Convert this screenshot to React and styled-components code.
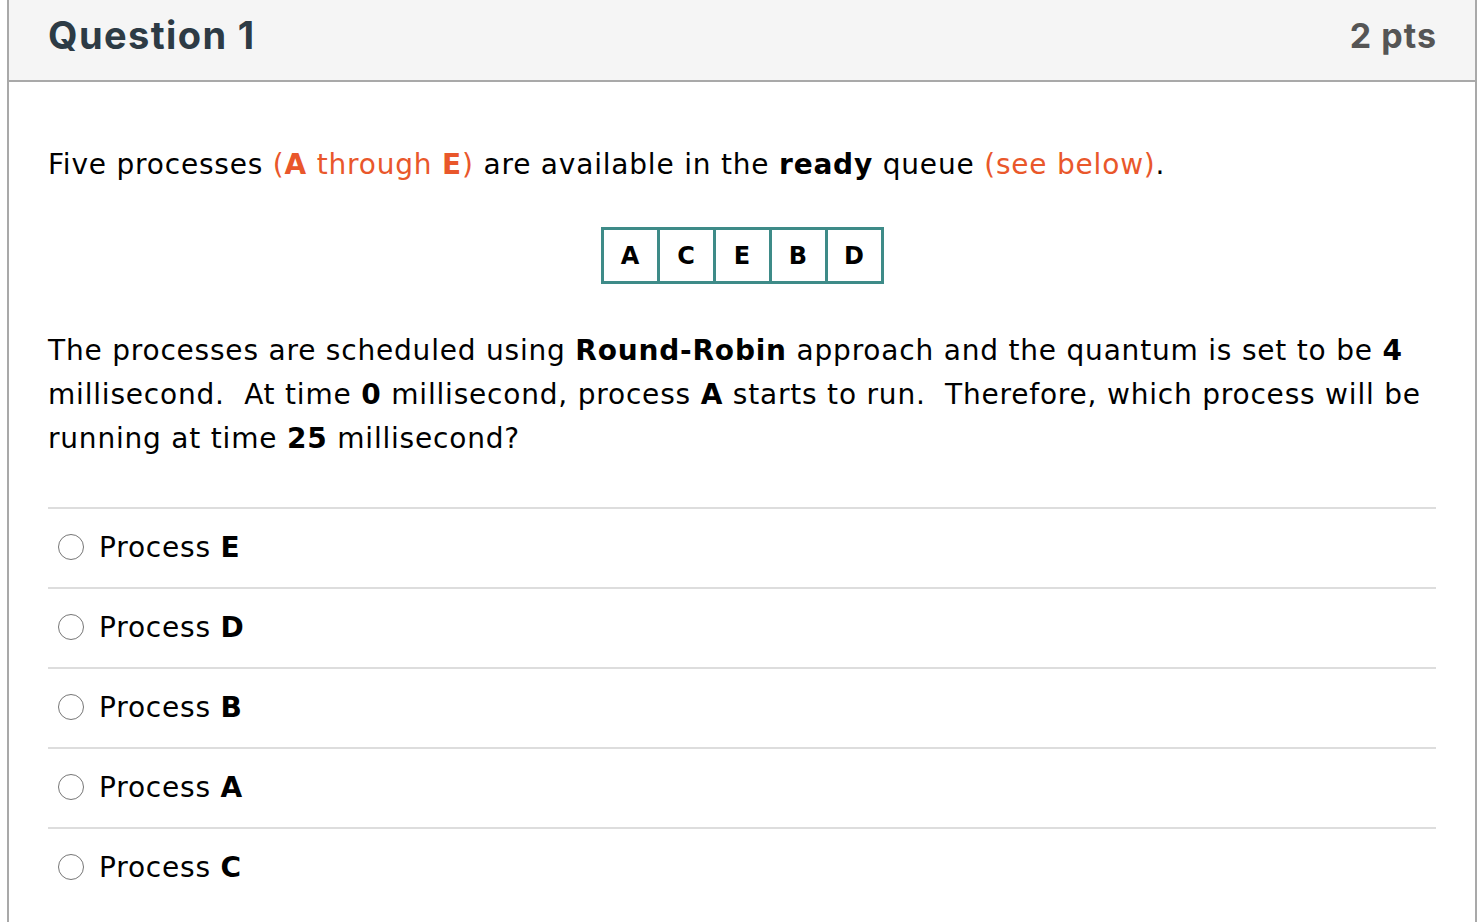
import React from 'react'
import styled, { createGlobalStyle } from 'styled-components'

const GlobalStyle = createGlobalStyle`
    html, body {
        margin: 0;
        padding: 0;
        background: #ffffff;
    }
    body {
        font-family: "DejaVu Sans", Verdana, sans-serif;
        color: #000000;
    }
`

const Panel = styled.div`
    margin-left: 7px;
    width: 1470px;
    height: 922px;
    border-left: 2px solid #a9a9a9;
    border-right: 2px solid #a9a9a9;
    box-sizing: border-box;
    overflow: hidden;
`

const Header = styled.div`
    display: flex;
    justify-content: space-between;
    align-items: center;
    height: 82px;
    padding: 0 38px 0 39px;
    background: #f5f5f5;
    border-bottom: 2px solid #a9a9a9;
    box-sizing: border-box;
`

const Title = styled.h2`
    margin: 0;
    padding-bottom: 10px;
    font-family: Inter, "Open Sans", sans-serif;
    font-weight: 700;
    font-size: 38px;
    letter-spacing: 1.4px;
    color: #2d3b45;
`

const Points = styled.span`
    padding-bottom: 10px;
    font-family: Inter, "Open Sans", sans-serif;
    font-weight: 700;
    font-size: 34px;
    letter-spacing: 1px;
    color: #555555;
`

const Body = styled.div`
    padding: 61px 39px 0 39px;
`

const Paragraph = styled.p`
    margin: 0;
    font-size: 28px;
    line-height: 44px;
    letter-spacing: 0.8px;
`

const Accent = styled.span`
    color: #e9572b;
`

const QueueRow = styled.div`
    display: flex;
    justify-content: center;
    padding: 40px 0 45px 0;
`

const Queue = styled.div`
    display: flex;
    border: 3px solid #3e8b88;
`

const Cell = styled.div`
    width: 53px;
    height: 51px;
    display: flex;
    align-items: center;
    justify-content: center;
    font-weight: 700;
    font-size: 24px;
    border-left: ${props => (props.first ? 'none' : '3px solid #3e8b88')};
`

const Options = styled.div`
    margin-top: 46px;
`

const Option = styled.label`
    display: flex;
    align-items: center;
    height: 80px;
    padding: 0 0 2px 10px;
    box-sizing: border-box;
    border-top: 2px solid #dddddd;
    font-size: 28px;
    letter-spacing: 0.8px;
`

const Radio = styled.span`
    width: 24px;
    height: 24px;
    border: 1.5px solid #767676;
    border-radius: 50%;
    margin-right: 15px;
    flex-shrink: 0;
`

const answers = ['E', 'D', 'B', 'A', 'C']
const queue = ['A', 'C', 'E', 'B', 'D']

const App = () => (
    <>
        <GlobalStyle />
        <Panel>
            <Header>
                <Title>Question 1</Title>
                <Points>2 pts</Points>
            </Header>
            <Body>
                <Paragraph>
                    Five processes <Accent>(<b>A</b> through <b>E</b>)</Accent> are available in the <b>ready</b> queue <Accent>(see below)</Accent>.
                </Paragraph>
                <QueueRow>
                    <Queue>
                        {queue.map((letter, i) => (
                            <Cell key={letter} first={i === 0}>{letter}</Cell>
                        ))}
                    </Queue>
                </QueueRow>
                <Paragraph>
                    The processes are scheduled using <b>Round-Robin</b> approach and the quantum is set to be <b>4</b> millisecond.&nbsp; At time <b>0</b> millisecond, process <b>A</b> starts to run.&nbsp; Therefore, which process will be running at time <b>25</b> millisecond?
                </Paragraph>
                <Options>
                    {answers.map(letter => (
                        <Option key={letter}>
                            <Radio />
                            Process&nbsp;<b>{letter}</b>
                        </Option>
                    ))}
                </Options>
            </Body>
        </Panel>
    </>
)

export default App
